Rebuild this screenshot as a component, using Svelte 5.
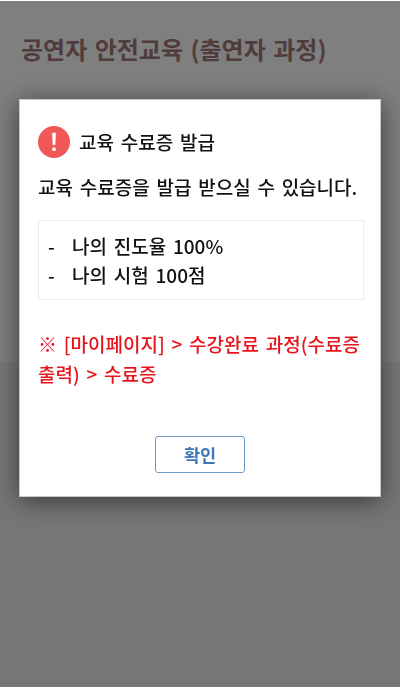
<script>
const items = ['나의 진도율 100%', '나의 시험 100점'];
</script>

<main>
	<h1>공연자 안전교육 (출연자 과정)</h1>
	<div class="lower"></div>
</main>

<div class="overlay">
	<div class="dialog">
		<div class="head">
			<svg class="alert" width="32" height="32" viewBox="0 0 32 32" aria-hidden="true">
				<circle cx="16" cy="16" r="16" fill="#f25757" />
				<path d="M14.3 7h3.4l-.7 11.8h-2z" fill="#fff" stroke="#fff" stroke-width=".5" stroke-linejoin="round" />
				<circle cx="16" cy="23.2" r="1.9" fill="#fff" />
			</svg>
			<h2>교육 수료증 발급</h2>
		</div>
		<p class="desc">교육 수료증을 발급 받으실 수 있습니다.</p>
		<ul class="box">
			{#each items as item}
				<li><span class="dash">-</span>{item}</li>
			{/each}
		</ul>
		<p class="note">※ [마이페이지] &gt; 수강완료 과정(수료증 출력) &gt; 수료증</p>
		<div class="actions">
			<button type="button">확인</button>
		</div>
	</div>
</div>

<style>
	:global(body) {
		margin: 0;
		background: #fff;
		font-family: "Noto Sans CJK KR", "Noto Sans", sans-serif;
		word-spacing: 2.5px;
	}

	main {
		height: 687px;
		box-sizing: border-box;
		padding-top: 1px;
		display: flex;
		flex-direction: column;
	}

	h1 {
		margin: 0;
		padding: 29px 21px 0;
		height: 361px;
		box-sizing: border-box;
		background: #fff;
		color: #a07878;
		font-size: 24px;
		font-weight: 700;
		line-height: 38px;
		word-spacing: 2px;
	}

	.lower {
		flex: 1;
		background: #ededed;
	}

	.overlay {
		position: fixed;
		inset: 1px 0 0 0;
		background: rgba(0, 0, 0, 0.5);
		padding: 98px 19px 0;
	}

	.dialog {
		height: 398px;
		box-sizing: border-box;
		background: #fff;
		padding: 26px 16px 0 18px;
		box-shadow: 0 4px 24px rgba(0, 0, 0, 0.55);
		border: 1px solid #c8c8c8;
		display: flex;
		flex-direction: column;
	}

	.head {
		display: flex;
		align-items: center;
		gap: 9px;
	}

	.alert {
		flex: none;
	}

	h2 {
		margin: 0;
		font-size: 19px;
		font-weight: 500;
		color: #111;
		line-height: 32px;
	}

	.desc {
		margin: 14px 0 0;
		font-size: 19px;
		font-weight: 500;
		line-height: 30px;
		color: #111;
	}

	.box {
		list-style: none;
		margin: 18px 0 0;
		padding: 10px 9px;
		border: 1px solid #ececec;
		height: 80px;
		box-sizing: border-box;
	}

	.box li {
		font-size: 19px;
		font-weight: 500;
		line-height: 29px;
		color: #111;
	}

	.dash {
		display: inline-block;
		width: 24px;
	}

	.note {
		margin: 29px 0 0;
		font-size: 19px;
		font-weight: 500;
		line-height: 30px;
		color: #e8141c;
	}

	.actions {
		margin-top: auto;
		padding: 0 2px 23px 0;
		display: flex;
		justify-content: center;
	}

	button {
		width: 90px;
		height: 37px;
		background: #fff;
		border: 1px solid #6b9aca;
		border-radius: 3px;
		color: #3a78b8;
		font: inherit;
		font-size: 17.5px;
		font-weight: 700;
		word-spacing: normal;
		padding: 0;
	}
</style>
